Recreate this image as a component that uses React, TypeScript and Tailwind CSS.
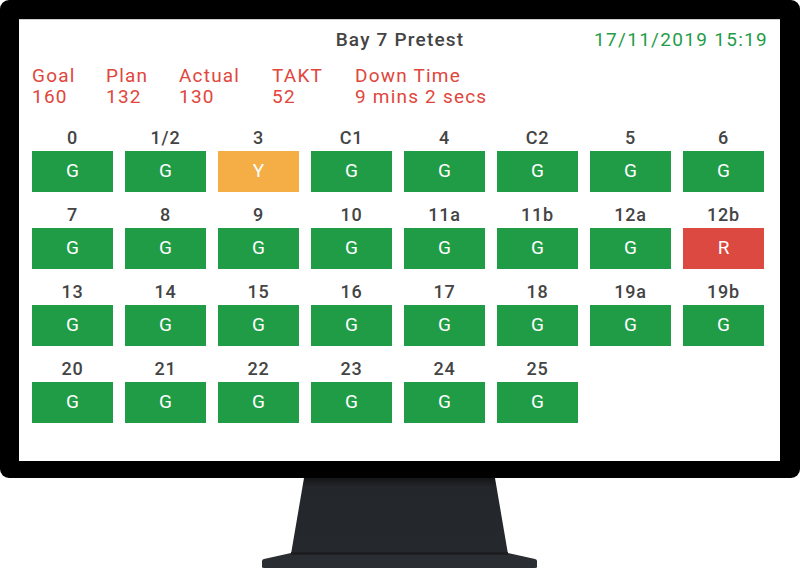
import React from 'react'

type Bay = { name: string; status: 'G' | 'Y' | 'R' }

const bays: Bay[] = [
  { name: '0', status: 'G' }, { name: '1/2', status: 'G' }, { name: '3', status: 'Y' }, { name: 'C1', status: 'G' },
  { name: '4', status: 'G' }, { name: 'C2', status: 'G' }, { name: '5', status: 'G' }, { name: '6', status: 'G' },
  { name: '7', status: 'G' }, { name: '8', status: 'G' }, { name: '9', status: 'G' }, { name: '10', status: 'G' },
  { name: '11a', status: 'G' }, { name: '11b', status: 'G' }, { name: '12a', status: 'G' }, { name: '12b', status: 'R' },
  { name: '13', status: 'G' }, { name: '14', status: 'G' }, { name: '15', status: 'G' }, { name: '16', status: 'G' },
  { name: '17', status: 'G' }, { name: '18', status: 'G' }, { name: '19a', status: 'G' }, { name: '19b', status: 'G' },
  { name: '20', status: 'G' }, { name: '21', status: 'G' }, { name: '22', status: 'G' }, { name: '23', status: 'G' },
  { name: '24', status: 'G' }, { name: '25', status: 'G' },
]

const statusBg = {
  G: 'bg-[#1f9c45]',
  Y: 'bg-[#f5ae45]',
  R: 'bg-[#dc4940]',
}

const stats = [
  { label: 'Goal', value: '160', w: 'w-[74px]' },
  { label: 'Plan', value: '132', w: 'w-[73px]' },
  { label: 'Actual', value: '130', w: 'w-[93px]' },
  { label: 'TAKT', value: '52', w: 'w-[83px]' },
  { label: 'Down Time', value: '9 mins 2 secs', w: 'w-auto' },
]

function Stand() {
  return (
    <svg width="800" height="91" viewBox="0 478 800 91" className="block">
      <defs>
        <linearGradient id="neck" x1="0" y1="0" x2="0" y2="1">
          <stop offset="0" stopColor="#141618" />
          <stop offset="0.12" stopColor="#23262a" />
          <stop offset="1" stopColor="#25282c" />
        </linearGradient>
      </defs>
      <polygon points="304,478 495,478 508,554 291,554" fill="url(#neck)" />
      <path d="M291,553 L264,559 Q262,559.5 262,561 L262,567 Q262,568 264,568 L535,568 Q537,568 537,567 L537,561 Q537,559.5 535,559 L508,553 Z" fill="#2a2d31" />
      <rect x="291" y="552" width="217" height="3" fill="#1c1e21" />
    </svg>
  )
}

export default function App() {
  return (
    <div className="w-[800px] h-[569px] bg-white overflow-hidden font-[Roboto,sans-serif]">
      {/* bezel */}
      <div className="w-[800px] h-[478px] bg-black rounded-[9px] pl-[19px] pr-[20px] pt-[19px] pb-[17px]">
        <div className="h-full bg-white border-t border-[#cfcfcf] pl-[13px] pr-[12px] pt-[8px]">
          {/* header */}
          <div className="relative h-[24px] leading-[24px] text-[19px]">
            <div className="text-center font-medium tracking-[1.2px] text-[#444444]">Bay 7 Pretest</div>
            <div className="absolute right-0 top-0 tracking-[1.3px] text-[#1f9c48]">17/11/2019 15:19</div>
          </div>

          {/* stats */}
          <div className="flex mt-[13px] text-[19px] leading-[21px] tracking-[1.2px] text-[#e0463c]">
            {stats.map(s => (
              <div key={s.label} className={`${s.w} shrink-0`}>
                <div>{s.label}</div>
                <div>{s.value}</div>
              </div>
            ))}
          </div>

          {/* bays */}
          <div className="grid grid-cols-[repeat(8,81px)] gap-x-[12px] gap-y-[11px] mt-[19px]">
            {bays.map(b => (
              <div key={b.name} className="flex flex-col">
                <div className="h-[25px] leading-[24px] text-center text-[18px] font-medium tracking-[0.8px] text-[#444444]">
                  {b.name}
                </div>
                <div className={`h-[41px] flex items-center justify-center text-white text-[19px] ${statusBg[b.status]}`}>
                  {b.status}
                </div>
              </div>
            ))}
          </div>
        </div>
      </div>
      <Stand />
    </div>
  )
}
